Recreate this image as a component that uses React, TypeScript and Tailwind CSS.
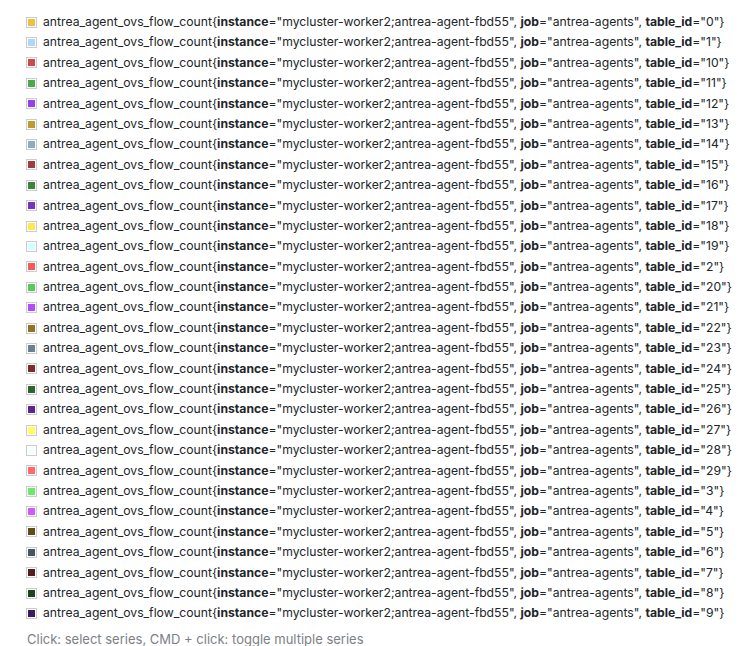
const colors = [
  '#edc240', '#afd8f8', '#cb4b4b', '#4da74d', '#9440ed',
  '#bd9b33', '#8cacc6', '#a23c3c', '#3d853d', '#7633bd',
  '#ffe84c', '#d2ffff', '#f35a5a', '#5cc85c', '#b14cff',
  '#8e7426', '#698194', '#792d2d', '#2e642e', '#58268e',
  '#ffff59', '#f5ffff', '#ff6969', '#6be96b', '#cf59ff',
  '#5e4d19', '#465663', '#511e1e', '#1e421e', '#3b195e',
]

// table ids are sorted as strings, like the legend does
const tableIds = Array.from({ length: 30 }, (_, i) => String(i)).sort()

export default function App() {
  return (
    <div
      className="min-h-screen bg-white pl-[26px] pt-[12px] text-[12.2px] text-[#212529]"
      style={{ fontFamily: 'Inter, "Liberation Sans", Arial, sans-serif' }}
    >
      <div>
        {tableIds.map((id, i) => (
          <div key={id} className="flex h-[20.4px] items-center whitespace-nowrap leading-[20.4px]">
            <span className="mr-[6px] inline-block border border-[#ccc] p-px">
              <span className="block h-[7px] w-[7px]" style={{ backgroundColor: colors[i] }} />
            </span>
            <span>
              antrea_agent_ovs_flow_count{'{'}
              <b>instance</b>="mycluster-worker2;antrea-agent-fbd55", <b>job</b>="antrea-agents",{' '}
              <b>table_id</b>="{id}"{'}'}
            </span>
          </div>
        ))}
      </div>
      <div className="mt-[5px] pl-px text-[13px] leading-[20px] text-[#7b8187]">
        Click: select series, CMD + click: toggle multiple series
      </div>
    </div>
  )
}
